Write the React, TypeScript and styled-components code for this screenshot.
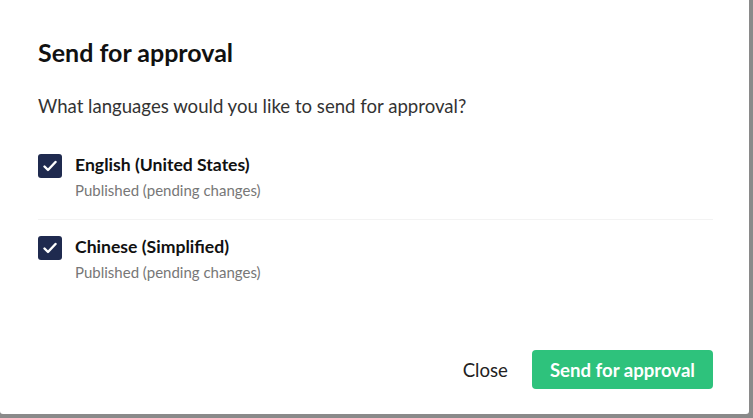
import * as React from 'react';
import styled, { createGlobalStyle } from 'styled-components';

const GlobalStyle = createGlobalStyle`
  html, body {
    margin: 0;
    padding: 0;
    background: #8a8a8a;
    font-family: Lato, "Open Sans", sans-serif;
  }
`;

const Dialog = styled.div`
  width: 749px;
  height: 414px;
  box-sizing: border-box;
  background: #fff;
  border-radius: 0 0 3px 3px;
  padding: 38px 36px 25px 38px;
  display: flex;
  flex-direction: column;
`;

const Title = styled.h2`
  margin: 0;
  font-size: 25px;
  line-height: 28px;
  font-weight: 700;
  color: #111;
`;

const Question = styled.p`
  margin: 28px 0 0;
  font-size: 18.6px;
  line-height: 24px;
  color: #333;
`;

const List = styled.div`
  margin-top: 36px;
  display: flex;
  flex-direction: column;
`;

const Item = styled.label<{ $divider?: boolean }>`
  display: flex;
  gap: 13px;
  padding: ${p => (p.$divider ? '0 0 19px' : '16px 0 0')};
  border-bottom: ${p => (p.$divider ? '1px solid #f3f3f3' : 'none')};
`;

const Box = styled.span`
  width: 24px;
  height: 24px;
  flex: none;
  border-radius: 3px;
  background: #1f2a4f;
  display: flex;
  align-items: center;
  justify-content: center;
`;

const Texts = styled.div`
  display: flex;
  flex-direction: column;
`;

const Name = styled.span`
  font-size: 17.6px;
  line-height: 22px;
  font-weight: 700;
  color: #111;
`;

const Status = styled.span`
  margin-top: 4px;
  font-size: 15px;
  line-height: 20px;
  color: #777;
`;

const Footer = styled.div`
  margin-top: auto;
  display: flex;
  justify-content: flex-end;
  align-items: center;
  gap: 24px;
`;

const CloseButton = styled.button`
  border: none;
  background: none;
  padding: 0;
  font-family: inherit;
  font-size: 18.6px;
  color: #222;
`;

const PrimaryButton = styled.button`
  height: 39px;
  padding: 0 18px;
  border: none;
  border-radius: 4px;
  background: #2ec27c;
  color: #fff;
  font-family: inherit;
  font-size: 18.6px;
  font-weight: 700;
`;

const Check = () => (
  <svg width="14" height="12" viewBox="0 0 14 12">
    <path d="M1.5 6.5 L5 10 L12.5 2" fill="none" stroke="#fff" strokeWidth="2.4" strokeLinecap="round" strokeLinejoin="round" />
  </svg>
);

const languages = [
  { name: 'English (United States)', status: 'Published (pending changes)' },
  { name: 'Chinese (Simplified)', status: 'Published (pending changes)' },
];

export default function App() {
  return (
    <>
      <GlobalStyle />
      <Dialog>
        <Title>Send for approval</Title>
        <Question>What languages would you like to send for approval?</Question>
        <List>
          {languages.map((lang, i) => (
            <Item key={lang.name} $divider={i < languages.length - 1}>
              <Box>
                <Check />
              </Box>
              <Texts>
                <Name>{lang.name}</Name>
                <Status>{lang.status}</Status>
              </Texts>
            </Item>
          ))}
        </List>
        <Footer>
          <CloseButton>Close</CloseButton>
          <PrimaryButton>Send for approval</PrimaryButton>
        </Footer>
      </Dialog>
    </>
  );
}
